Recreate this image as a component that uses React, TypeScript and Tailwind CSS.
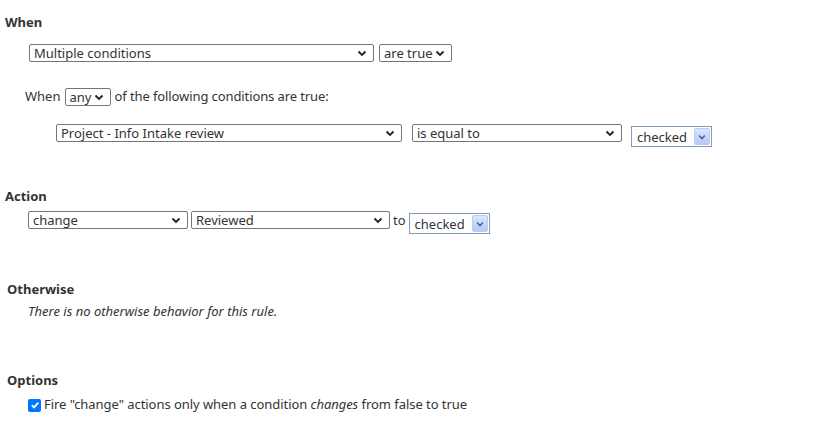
const Chevron = () => (
  <svg width="10" height="7" viewBox="0 0 10 7" className="shrink-0">
    <path d="M1.5 1.5 L5 5 L8.5 1.5" fill="none" stroke="#222" strokeWidth="1.8" />
  </svg>
);

const Select = ({ label, width }: { label: string; width: number }) => (
  <div
    className="h-[18px] border border-[#767676] rounded-[2px] bg-white flex items-center justify-between pl-[4px] pr-[6px]"
    style={{ width }}
  >
    <span className="leading-[16px] whitespace-nowrap -mt-[1px]">{label}</span>
    <Chevron />
  </div>
);

// old-style combo with a blue drop button
const LegacySelect = ({ label }: { label: string }) => (
  <div className="mt-[2px] h-[21px] w-[81px] border border-[#7f9db9] bg-white flex items-center justify-between pl-[5px] pr-[1px]">
    <span className="leading-[16px] whitespace-nowrap">{label}</span>
    <div className="w-[16px] h-[17px] rounded-[2px] border border-[#b8cbf4] bg-gradient-to-b from-[#dbe6fd] to-[#b6c9f7] flex items-center justify-center">
      <svg width="8" height="6" viewBox="0 0 8 6">
        <path d="M1 1.5 L4 4.5 L7 1.5" fill="none" stroke="#4d6185" strokeWidth="1.6" />
      </svg>
    </div>
  </div>
);

const App = () => {
  return (
    <div className="w-[825px] h-[425px] bg-white text-[13px] text-[#333] font-['Noto_Sans','Open_Sans',sans-serif] pt-[13px]">
      <h3 className="pl-[5px] h-[18px] leading-[18px] font-bold">When</h3>
      <div className="mt-[13px] ml-[29px] flex gap-[5px]">
        <Select label="Multiple conditions" width={345} />
        <Select label="are true" width={73} />
      </div>

      <div className="mt-[26px] ml-[25px] flex items-center gap-[4px] h-[18px]">
        <span>When</span>
        <Select label="any" width={46} />
        <span className="tracking-[-0.1px]">of the following conditions are true:</span>
      </div>

      <div className="mt-[18px] ml-[56px] flex items-start h-[23px]">
        <Select label="Project - Info Intake review" width={346} />
        <div className="w-[10px]" />
        <Select label="is equal to" width={210} />
        <div className="w-[9px]" />
        <LegacySelect label="checked" />
      </div>

      <h3 className="mt-[40px] pl-[5px] h-[18px] leading-[18px] font-bold">Action</h3>
      <div className="mt-[6px] ml-[28px] flex items-start h-[23px]">
        <Select label="change" width={160} />
        <div className="w-[3px]" />
        <Select label="Reviewed" width={199} />
        <span className="leading-[18px] mx-[3px]">to</span>
        <LegacySelect label="checked" />
      </div>

      <h3 className="mt-[46px] pl-[7px] h-[18px] leading-[18px] font-bold">Otherwise</h3>
      <p className="mt-[4px] pl-[28px] h-[18px] leading-[18px] italic">
        There is no otherwise behavior for this rule.
      </p>

      <h3 className="mt-[51px] pl-[7px] h-[18px] leading-[18px] font-bold">Options</h3>
      <label className="mt-[7px] pl-[28px] h-[18px] flex items-center gap-[3px]">
        <span className="w-[13px] h-[13px] rounded-[2px] bg-[#0075ff] flex items-center justify-center">
          <svg width="10" height="10" viewBox="0 0 10 10">
            <path d="M1.8 5.2 L4 7.4 L8.3 2.6" fill="none" stroke="#fff" strokeWidth="1.8" />
          </svg>
        </span>
        <span className="tracking-[-0.05px]">
          Fire "change" actions only when a condition <i>changes</i> from false to true
        </span>
      </label>
    </div>
  );
};

export default App;
